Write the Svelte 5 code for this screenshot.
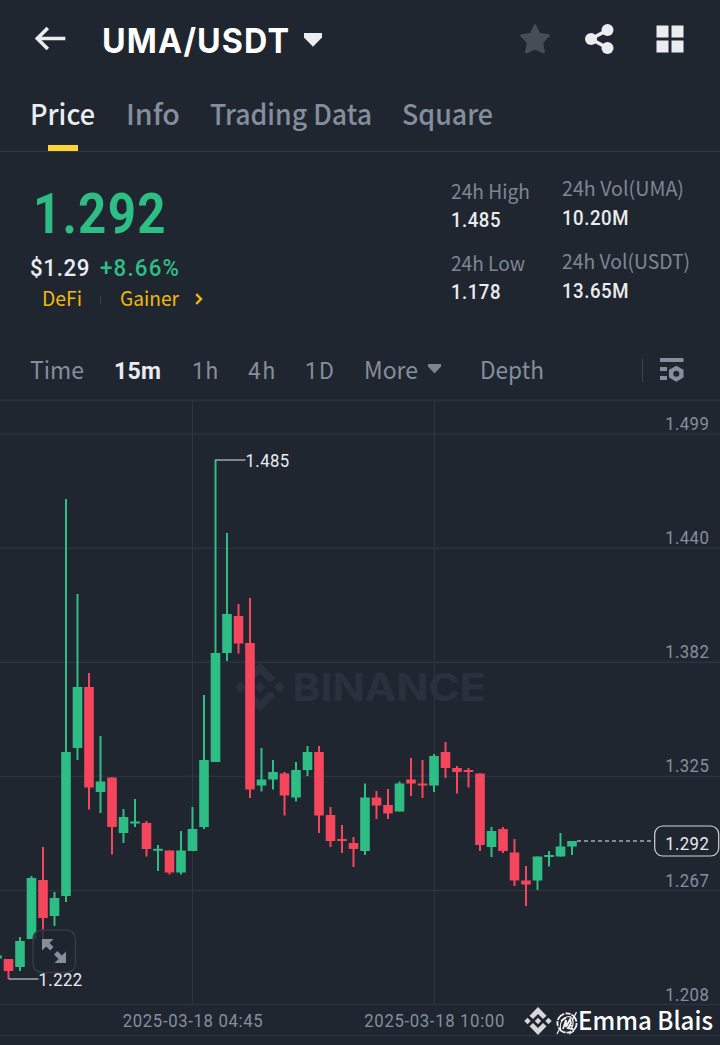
<script>
  const tabs = [
    { name: 'Price', width: 65, gap: 31, active: true },
    { name: 'Info', width: 54, gap: 30 },
    { name: 'Trading Data', width: 162, gap: 30 },
    { name: 'Square', width: 91, gap: 0 }
  ];

  const stats = [
    { label: '24h High', value: '1.485' },
    { label: '24h Low', value: '1.178' }
  ];
  const volumes = [
    { label: '24h Vol(UMA)', value: '10.20M' },
    { label: '24h Vol(USDT)', value: '13.65M' }
  ];

  const gridRows = [
    { y: 434, label: '1.499' },
    { y: 548.3, label: '1.440' },
    { y: 662.3, label: '1.382' },
    { y: 776.4, label: '1.325' },
    { y: 890.5, label: '1.267' },
    { y: 1004.5, label: '1.208' }
  ];

  // [direction, wick top, body top, body bottom, wick bottom]
  const candles = [
    ['g', 955, 955.5, 958.5, 958.5],
    ['r', 959, 959, 971, 979],
    ['g', 937, 941, 967, 971],
    ['g', 876, 878, 939, 939],
    ['r', 847, 880, 918, 939],
    ['g', 892, 898, 916, 926],
    ['g', 499, 752, 896, 902],
    ['g', 594, 687, 748, 760],
    ['r', 673, 687, 787.5, 809.5],
    ['g', 736, 781.5, 792, 813],
    ['r', 777.5, 777.5, 827, 854.5],
    ['g', 809, 817, 833, 843],
    ['g', 799, 821.5, 823.5, 827],
    ['r', 821, 823, 849, 856.5],
    ['g', 845, 848.8, 850.8, 871],
    ['r', 850.5, 850.5, 872.5, 874.5],
    ['g', 831, 850.5, 872.5, 874.5],
    ['g', 807, 829, 851, 851],
    ['g', 695, 760, 827, 829],
    ['g', 460, 653, 762, 762],
    ['g', 533, 614, 653, 661],
    ['r', 604, 616, 643.5, 653.5],
    ['r', 598, 643, 789.5, 798],
    ['g', 748, 779.5, 785.5, 791.5],
    ['g', 760, 772, 779.5, 789.5],
    ['r', 772, 773.5, 795.5, 815.5],
    ['g', 762, 770, 797.5, 801.5],
    ['g', 746, 752, 770, 776],
    ['r', 746, 752, 815.5, 833],
    ['r', 807, 815, 841, 847],
    ['r', 825, 839, 841, 853],
    ['r', 837, 843, 849, 867],
    ['g', 783.5, 797.5, 851, 855],
    ['r', 791, 797.5, 805.5, 819],
    ['r', 789, 805, 813.5, 819],
    ['g', 781.5, 783.5, 811.5, 811.5],
    ['r', 758, 779.5, 783.5, 796],
    ['r', 760, 783.5, 785.5, 798],
    ['g', 754, 756, 785.5, 792],
    ['r', 742, 752, 768, 778],
    ['r', 766, 768, 772, 793.5],
    ['r', 768, 770, 772, 787.5],
    ['r', 773.5, 773.5, 845, 851],
    ['g', 827, 831, 847, 857],
    ['r', 827, 829, 851, 853],
    ['r', 839, 852.5, 880.5, 886],
    ['r', 866, 880.5, 884.5, 906],
    ['g', 856.5, 856.5, 880.5, 890],
    ['g', 851, 855, 857, 866.5],
    ['g', 833, 846.5, 856.5, 856.5],
    ['g', 841, 841, 846.5, 855]
  ].map(([dir, high, top, bottom, low], i) => ({ dir, high, top, bottom, low, x: -3 + i * 11.5 }));
</script>

{#snippet fit(text, width, size)}
  <svg class="fit" {width} height={size} aria-label={text}>
    <text x="0" y={size * 0.8} font-size={size} textLength={width} lengthAdjust="spacingAndGlyphs">{text}</text>
  </svg>
{/snippet}

{#snippet din(text, width, size, squeeze = 0.93)}
  <svg class="fit" {width} height={size} aria-label={text}>
    <text transform="scale({squeeze} 1)" x="0" y={size * 0.8} font-size={size} textLength={width / squeeze} lengthAdjust="spacing">{text}</text>
  </svg>
{/snippet}

{#snippet chartText(cls, text, x, y, width)}
  <text class={cls} transform="translate({x} {y}) scale(.93 1)" textLength={width / 0.93} lengthAdjust="spacing">{text}</text>
{/snippet}

<main>
  <header>
    <svg class="back" width="32" height="26" viewBox="0 0 32 26">
      <path d="M13.8 2 L3.3 12.5 L13.8 23 M3.8 12.5 H31.3" fill="none" stroke="#eaecef" stroke-width="3.6" />
    </svg>
    <h1>{@render din('UMA/USDT', 187, 34, 0.95)}</h1>
    <svg class="caret" width="18" height="14" viewBox="0 0 18 14"><path d="M0 0H18V4.5L9 13.7L0 4.5Z" fill="#eaecef" /></svg>
    <div class="actions">
      <svg width="30" height="30" viewBox="0 0 30 30">
        <path d="M15 1.6 L19 10 L28.5 11.6 L21.8 18.3 L23.6 28.2 L15 24 L6.4 28.2 L8.2 18.3 L1.5 11.6 L11 10Z" fill="#474d57" stroke="#474d57" stroke-width="2.6" stroke-linejoin="round" />
      </svg>
      <svg class="share" width="30" height="30" viewBox="0 0 30 30">
        <path d="M22.5 6 L6 15 L22.5 24" fill="none" stroke="#eaecef" stroke-width="3.6" />
        <circle cx="22.5" cy="6" r="6" fill="#eaecef" /><circle cx="6" cy="15" r="6" fill="#eaecef" /><circle cx="22.5" cy="24" r="6" fill="#eaecef" />
      </svg>
      <svg class="grid" width="28" height="28" viewBox="0 0 28 28" fill="#eaecef">
        <rect x=".5" y=".5" width="12" height="12" /><rect x="15.5" y=".5" width="12" height="12" />
        <rect x=".5" y="15.5" width="12" height="12" /><rect x="15.5" y="15.5" width="12" height="12" />
      </svg>
    </div>
  </header>

  <nav class="tabs">
    {#each tabs as tab}
      <span class="tab" class:active={tab.active} style:margin-right="{tab.gap}px">{@render fit(tab.name, tab.width, 28)}</span>
    {/each}
  </nav>

  <section class="summary">
    <div class="quote">
      <div class="last">{@render din('1.292', 132.5, 56, 0.88)}</div>
      <div class="change">
        <span class="fiat">{@render din('$1.29', 59.5, 24)}</span>
        <span class="up">{@render din('+8.66%', 79, 24)}</span>
      </div>
      <div class="tags">
        {@render fit('DeFi', 40, 20)}
        <i></i>
        {@render fit('Gainer', 59, 20)}
        <svg class="chevron" width="8" height="12" viewBox="0 0 8 12"><path d="M1.2 1.2L6 6L1.2 10.8" fill="none" stroke="#f0b90b" stroke-width="2.4" /></svg>
      </div>
    </div>
    <dl class="stats">
      {#each stats as s, i}
        <dt>{@render fit(s.label, i ? 74 : 79, 20)}</dt>
        <dd>{@render din(s.value, 49.5, 20)}</dd>
      {/each}
    </dl>
    <dl class="volumes">
      {#each volumes as s, i}
        <dt>{@render fit(s.label, i ? 128 : 122, 20)}</dt>
        <dd>{@render din(s.value, 66.5, 20)}</dd>
      {/each}
    </dl>
  </section>

  <nav class="intervals">
    <span class="time">{@render fit('Time', 54, 24)}</span>
    <span class="on">{@render din('15m', 47, 24, 0.96)}</span>
    <span class="num">{@render din('1h', 26, 24)}</span>
    <span class="num">{@render din('4h', 27, 24)}</span>
    <span class="num last-num">{@render din('1D', 29, 24)}</span>
    <span class="more">{@render fit('More', 54, 24)}
      <svg width="13" height="10" viewBox="0 0 13 10"><path d="M0 0H13V2.5L6.5 9.5L0 2.5Z" fill="#7c8492" /></svg>
    </span>
    <span>{@render fit('Depth', 64, 24)}</span>
    <i></i>
    <svg class="settings" width="24" height="24" viewBox="0 0 24 24" fill="#848e9c">
      <path d="M0 0H23.5V4H0Z M0 9H7V13H0Z M0 18H7V22H0Z" />
      <path fill-rule="evenodd" d="M16.3 7.8L23.5 11.8V19.5L16.3 23.8L9 19.5V11.8Z M16.3 12.8A3 3 0 1 0 16.3 18.8A3 3 0 1 0 16.3 12.8Z" />
    </svg>
  </nav>

  <svg class="chart" width="720" height="646" viewBox="0 399 720 646">
    <path d="M0 400.3H720" stroke="#2b313b" stroke-width="1.7" />
    {#each gridRows as row}
      <path d="M0 {row.y}H720" stroke="#2d333e" stroke-width="1.4" />
    {/each}
    <path d="M192.5 401V1004M434.5 401V1004" stroke="#2f3540" stroke-width="1.1" />
    <path d="M0 1035.5H720" stroke="#2f3540" />

    <g fill="#2b313c">
      <path d="M260 662.5L275.3 678L270 683.3L260 673.3L250 683.3L244.7 678Z M260 711.5L275.3 696L270 690.7L260 700.7L250 690.7L244.7 696Z M260 681.5L265.5 687L260 692.5L254.5 687Z M240.5 681.5L246 687L240.5 692.5L235 687Z M279.5 681.5L285 687L279.5 692.5L274 687Z" />
      <text class="brand" x="292.5" y="700.5" textLength="193" lengthAdjust="spacingAndGlyphs">BINANCE</text>
    </g>

    {#each candles as c}
      <g fill={c.dir === 'g' ? '#2ebd85' : '#f6465d'}>
        <rect x={c.x - 1} y={c.high} width="2" height={c.low - c.high} />
        <rect x={c.x - 4.8} y={c.top} width="9.6" height={c.bottom - c.top} />
      </g>
    {/each}

    <path d="M215 460H245.5M8.5 979H38.5" stroke="#a0a5ae" stroke-width="1.5" />
    {@render chartText('mark', '1.485', 245.5, 467, 43.7)}
    {@render chartText('mark', '1.222', 38.5, 986, 43.7)}

    <rect x="33" y="930" width="42.5" height="42.5" rx="9" fill="#202630" fill-opacity=".82" stroke="#343b46" stroke-width="1.5" />
    <path d="M42 939H53.5L49.5 943L53.5 947L50.2 950.5L46.2 946.5L42 950.5Z M66 963H54.5L58.5 959L54 954.5L57.3 951L61.8 955.5L66 951.5Z" fill="#848e9c" />

    {#each gridRows as row}
      {@render chartText('axis', row.label, 665.3, row.y - 4, 43.5)}
    {/each}
    {@render chartText('axis', '2025-03-18 04:45', 122.7, 1027, 140)}
    {@render chartText('axis', '2025-03-18 10:00', 364.3, 1027, 140)}

    <path d="M577 841H655" stroke="#a6abb3" stroke-width="1.4" stroke-dasharray="4 3" />
    <rect x="654.7" y="826" width="64" height="30" rx="8" fill="#202630" stroke="#d0d3d8" stroke-width="1.2" />
    {@render chartText('mark', '1.292', 665.3, 850, 43.5)}

    <path fill="#d6d7d9" d="M538 1007L546.5 1015.7L543 1019L538 1014L533 1019L529.5 1015.7Z M538 1035L546.5 1026.3L543 1023L538 1028L533 1023L529.5 1026.3Z M538 1017.8L541.2 1021L538 1024.2L534.8 1021Z M527.5 1017.8L530.7 1021L527.5 1024.2L524.3 1021Z M548.5 1017.8L551.7 1021L548.5 1024.2L545.3 1021Z" />
    <g fill="none" stroke="#f2f2f2" stroke-width="1.2">
      <ellipse cx="567" cy="1023" rx="9.6" ry="9.6" stroke-width="1.8" stroke-dasharray="9 1.5 5 1" />
      <path d="M576.5 1012L573 1019M561 1031C558.5 1023 563 1016.5 570 1016.5C574 1019 574 1025 571 1029M559 1030L557 1034M569 1034L574 1031" />
      <path d="M563 1029L566 1020L566 1027L570 1019.5L571 1023L568 1028L573 1029M561 1021L566 1017.5M569 1025L572.5 1026" stroke-width="1.8" />
    </g>
    <text class="author" x="578" y="1030" textLength="135" lengthAdjust="spacingAndGlyphs">Emma Blais</text>
  </svg>
</main>

<style>
  :global(body) { background: #202630; }
  main {
    width: 720px;
    height: 1045px;
    overflow: hidden;
    background: #202630;
    color: #eaecef;
    font-family: "Noto Sans CJK SC", "Open Sans", sans-serif;
  }
  svg { display: block; flex: none; }
  .fit { overflow: visible; }
  .fit text { fill: currentColor; }
  header { display: flex; align-items: center; height: 80px; padding: 0 36px 0 34px; box-sizing: border-box; }
  .back { margin-top: -2px; }
  h1 { margin: 13px 15px 7px 36px; color: #fff; font-family: Inter, sans-serif; font-weight: 700; }
  .caret { margin-top: -1px; }
  .actions { display: flex; align-items: center; margin-left: auto; margin-top: -2px; }
  .share { margin-left: 35px; }
  .grid { margin-left: 41px; }
  .tabs { display: flex; height: 72px; box-sizing: border-box; padding-left: 30px; border-bottom: 1px solid #333943; color: #848e9c; font-weight: 500; }
  .tab { position: relative; padding-top: 23px; }
  .active { color: #eaecef; }
  .active::after { content: ""; position: absolute; left: 18px; bottom: 0; width: 30px; height: 6px; background: #fcd535; }
  .summary { display: flex; height: 188px; }
  .quote { width: 451px; padding-left: 30px; box-sizing: border-box; }
  .last { margin: 36px 0 0 3px; color: #2ebd85; font-family: Roboto, sans-serif; font-weight: 700; }
  .change { display: flex; gap: 10px; margin-top: 13px; font-family: Roboto, sans-serif; font-weight: 500; }
  .up { color: #2ebd85; }
  .tags { display: flex; align-items: center; margin: 9px 0 0 12px; color: #f0b90b; }
  .tags i { width: 1px; height: 8px; margin: 0 19px 0 18px; background: #3a414c; }
  .chevron { margin: -2px 0 0 16px; }
  dl { margin: 0; }
  dt { color: #7e8694; }
  dd { margin: 0; font-family: Roboto, sans-serif; font-weight: 500; }
  .stats { width: 111px; padding-top: 31px; }
  .stats dt { height: 28px; }
  .stats dd { height: 44px; }
  .volumes { padding-top: 28px; }
  .volumes dt { height: 29px; }
  .volumes dd { height: 43.5px; }
  .intervals { display: flex; align-items: center; height: 59px; padding: 0 36px 0 30px; color: #848e9c; }
  .intervals span { position: relative; top: 2px; }
  .intervals .time { margin-right: 30px; }
  .intervals .num { margin-right: 30px; font-family: Roboto, sans-serif; }
  .intervals .last-num { margin-right: 29px; }
  .intervals .on { margin-right: 31px; color: #eaecef; font-family: Roboto, sans-serif; font-weight: 700; }
  .intervals .more { display: flex; gap: 10px; align-items: center; margin: 0 39px 0 1px; }
  .more > svg:last-child { margin-top: -6px; }
  .intervals i { width: 1px; height: 24px; margin-left: auto; background: #3a414c; }
  .settings { margin-left: 17px; }
  .brand { font: 700 38px Inter, sans-serif; }
  .mark { font: 400 18px Roboto, sans-serif; fill: #eaecef; }
  .axis { font: 400 18px Roboto, sans-serif; fill: #848e9c; }
  .author { font: 500 25px "Noto Sans CJK SC", sans-serif; fill: #fff; }
</style>
